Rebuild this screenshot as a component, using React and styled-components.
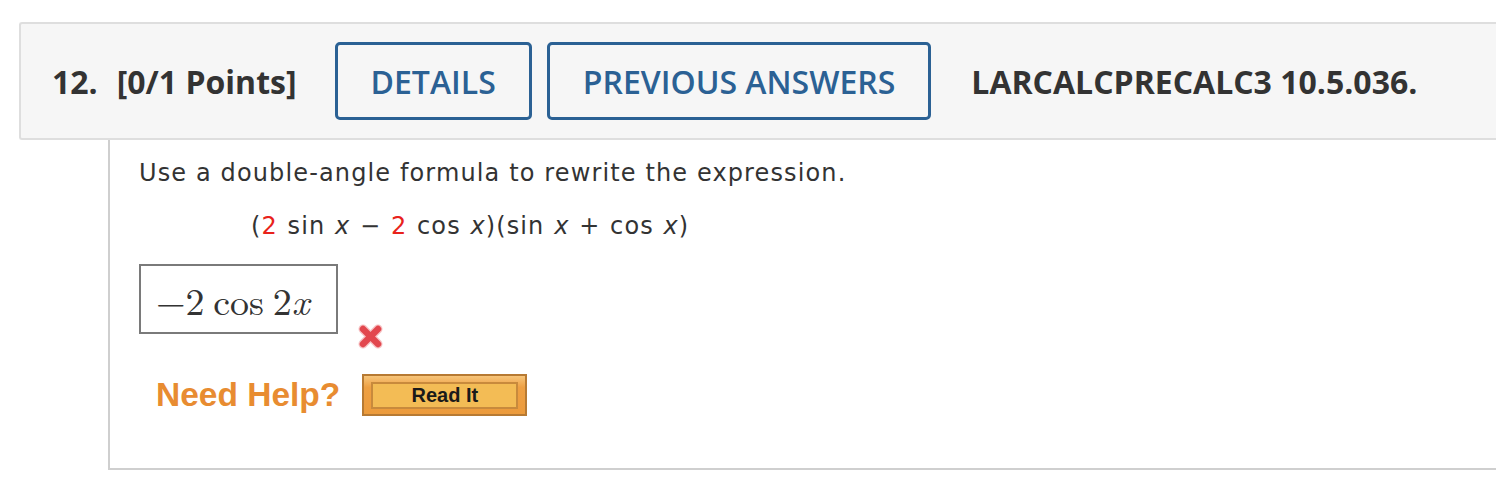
import React from "react";
import styled, { createGlobalStyle } from "styled-components";

const Global = createGlobalStyle`
  html, body { margin: 0; padding: 0; background: #fff; }
  body { width: 1496px; height: 480px; overflow: hidden; }
`;

const Page = styled.div`
  padding-top: 22px;
  padding-left: 19px;
`;

const Header = styled.div`
  display: flex;
  align-items: center;
  height: 114px;
  background: #f6f6f6;
  border: 2px solid #dedede;
  border-right: none;
  border-radius: 3px 0 0 3px;
  padding-left: 31px;
  font-family: "Open Sans", sans-serif;
  color: #333;
`;

const Title = styled.div`
  font-size: 32px;
  font-weight: 700;
  white-space: nowrap;
  margin-right: ${(p) => p.$mr || 0}px;
`;

const HeadButton = styled.div`
  box-sizing: border-box;
  height: 78px;
  padding: 0 33px;
  border: 3px solid #2b6194;
  border-radius: 5px;
  display: flex;
  align-items: center;
  justify-content: center;
  color: #2b6194;
  font-size: 32px;
  font-weight: 600;
  white-space: nowrap;
  margin-right: ${(p) => p.$mr}px;
`;

const Body = styled.div`
  margin-left: 89px;
  border-left: 2px solid #cfcfcf;
  border-bottom: 2px solid #cfcfcf;
  height: 330px;
  box-sizing: border-box;
  padding: 18px 0 0 29px;
  font-family: "DejaVu Sans", Verdana, sans-serif;
  color: #333;
`;

const Prompt = styled.div`
  font-size: 24px;
  line-height: 30px;
  letter-spacing: 1.13px;
`;

const MathLine = styled.div`
  font-size: 24px;
  line-height: 30px;
  letter-spacing: 1.1px;
  word-spacing: 1px;
  margin: 23px 0 0 112px;
`;

const Red = styled.span`
  color: #e8221b;
`;

const Var = styled.i`
  font-style: italic;
`;

const AnswerRow = styled.div`
  display: flex;
  align-items: flex-start;
  margin-top: 23px;
`;

const AnswerBox = styled.div`
  box-sizing: border-box;
  width: 199px;
  height: 70px;
  border: 2px solid #7a7a7a;
  display: flex;
  align-items: center;
  padding-left: 15px;
  font-family: "Latin Modern Roman", "Liberation Serif", "DejaVu Serif", serif;
  font-size: 38px;
  word-spacing: -4px;
  color: #333;
`;

const Cross = styled.svg`
  margin: 59px 0 0 19px;
  width: 27px;
  height: 27px;
`;

const HelpRow = styled.div`
  display: flex;
  align-items: center;
  margin-top: 24px;
  padding-left: 17px;
`;

const NeedHelp = styled.span`
  font-family: "Liberation Sans", Arial, sans-serif;
  font-weight: 700;
  font-size: 33.5px;
  color: #e88c31;
  margin-right: 22px;
`;

const ReadIt = styled.div`
  box-sizing: border-box;
  width: 165px;
  height: 42px;
  border: 2px solid #b77a33;
  background: linear-gradient(#f7c57a, #eea043 30%, #ec9b3c);
  padding: 6px 7px 5px;
`;

const ReadInner = styled.div`
  box-sizing: border-box;
  height: 100%;
  border: 2px solid #c88a3c;
  background: #f3bc55;
  display: flex;
  align-items: center;
  justify-content: center;
  font-family: "Liberation Sans", Arial, sans-serif;
  font-weight: 700;
  font-size: 20px;
  color: #1a1a1a;
`;

export default function App() {
  return (
    <>
      <Global />
      <Page>
        <Header>
          <Title $mr={19}>12.</Title>
          <Title $mr={38}>[0/1 Points]</Title>
          <HeadButton $mr={15}>DETAILS</HeadButton>
          <HeadButton $mr={40}>PREVIOUS ANSWERS</HeadButton>
          <Title>LARCALCPRECALC3 10.5.036.</Title>
        </Header>
        <Body>
          <Prompt>Use a double-angle formula to rewrite the expression.</Prompt>
          <MathLine>
            (<Red>2</Red> sin <Var>x</Var> − <Red>2</Red> cos <Var>x</Var>)(sin{" "}
            <Var>x</Var> + cos <Var>x</Var>)
          </MathLine>
          <AnswerRow>
            <AnswerBox>
              −2 cos 2<Var>x</Var>
            </AnswerBox>
            <Cross viewBox="0 0 27 27">
              <g stroke="#f29a9d" strokeWidth="9" strokeLinecap="round" opacity="0.6">
                <line x1="6" y1="6" x2="21" y2="21" />
                <line x1="21" y1="6" x2="6" y2="21" />
              </g>
              <g stroke="#e2474e" strokeWidth="6.5" strokeLinecap="round">
                <line x1="6" y1="6" x2="21" y2="21" />
                <line x1="21" y1="6" x2="6" y2="21" />
              </g>
            </Cross>
          </AnswerRow>
          <HelpRow>
            <NeedHelp>Need Help?</NeedHelp>
            <ReadIt>
              <ReadInner>Read It</ReadInner>
            </ReadIt>
          </HelpRow>
        </Body>
      </Page>
    </>
  );
}
